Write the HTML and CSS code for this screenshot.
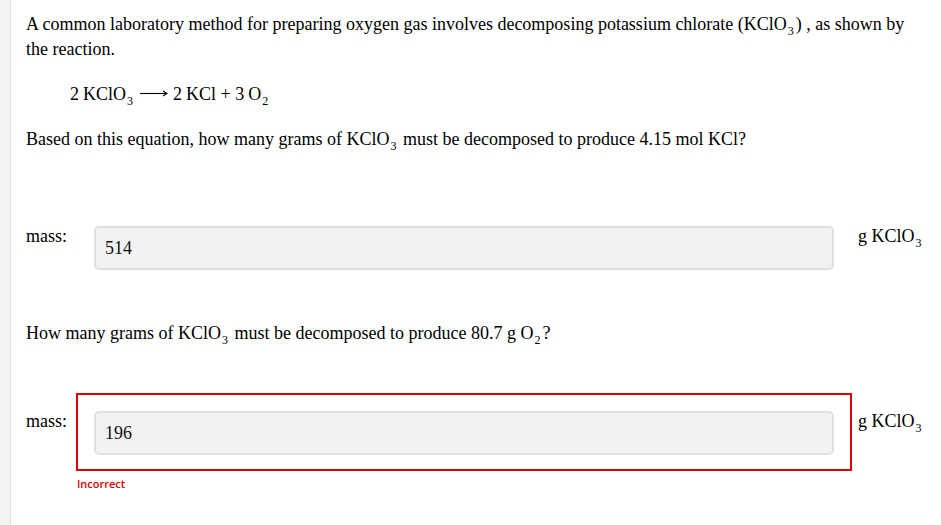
FILE: index.html
```html
<!DOCTYPE html>
<html>
<head>
<meta charset="utf-8">
<link rel="stylesheet" href="styles.css">
</head>
<body>
<div class="page">
  <div class="rail"></div>
  <main class="content">
    <p class="intro">A common laboratory method for preparing oxygen gas involves decomposing potassium chlorate (KClO<sub>3</sub>) , as shown by the reaction.</p>
    <p class="equation"><span class="coef">2</span>KClO<sub>3</sub><svg class="arrow" width="28" height="10" viewBox="0 0 28 10" aria-hidden="true"><path d="M0 5.5H26.5" stroke="#000" stroke-width="1.1" fill="none"/><path d="M23 3L27 5.5L23 8" stroke="#000" stroke-width="1.1" fill="none"/></svg><span class="coef">2</span>KCl + <span class="coef">3</span>O<sub>2</sub></p>
    <p class="question q1">Based on this equation, how many grams of KClO<sub>3</sub> must be decomposed to produce 4.15 mol KCl?</p>
    <div class="answer-row">
      <div class="label">mass:</div>
      <div class="field">
        <div class="input">514</div>
      </div>
      <div class="unit">g KClO<sub>3</sub></div>
    </div>
    <p class="question q2">How many grams of KClO<sub>3</sub> must be decomposed to produce 80.7 g O<sub>2</sub>?</p>
    <div class="answer-row">
      <div class="label">mass:</div>
      <div class="field field-wrong">
        <div class="input">196</div>
      </div>
      <div class="unit">g KClO<sub>3</sub></div>
      <div class="feedback">Incorrect</div>
    </div>
  </main>
</div>
</body>
</html>
```
FILE: styles.css
```css
html, body {
  margin: 0;
  padding: 0;
  background: #ffffff;
}
body {
  font-family: "Liberation Serif", "Times New Roman", serif;
  font-size: 18px;
  color: #000;
}
.page {
  display: flex;
  min-height: 525px;
}
.rail {
  width: 10px;
  flex: 0 0 10px;
  background: #f4f4f4;
  border-right: 1px solid #e3e3e3;
}
.content {
  flex: 1;
  padding: 12px 30px 0 15px;
}
p {
  margin: 0;
  line-height: 25px;
}
sub {
  font-size: 12px;
  line-height: 0;
  vertical-align: -5px;
  margin: 0 2px 0 1px;
}
.equation {
  margin-top: 20px;
  padding-left: 44px;
}
.equation sub {
  margin-right: 0;
}
.coef {
  margin-right: 4px;
}
.arrow {
  display: inline-block;
  vertical-align: 2px;
  margin: 0 5px 0 7px;
}
.q1 {
  margin-top: 20px;
}
.answer-row {
  display: grid;
  grid-template-columns: 50px 1fr 89px;
  margin: 56px -30px 0 0;
}
.label {
  padding-top: 19px;
  line-height: 18px;
}
.field {
  border: 2px solid transparent;
  padding: 16px 16px 14px 16px;
}
.field-wrong {
  border-color: #dc0000;
}
.input {
  height: 40px;
  line-height: 40px;
  background: #f2f2f2;
  border: 2px solid #e0e0e0;
  border-radius: 5px;
  padding-left: 9px;
  color: #111;
}
.unit {
  padding: 19px 0 0 6px;
  line-height: 18px;
}
.q2 {
  margin-top: 35px;
}
.q2 + .answer-row {
  margin-top: 47px;
}
.feedback {
  grid-column: 2;
  font-family: "Open Sans", "Liberation Sans", sans-serif;
  font-weight: 600;
  font-size: 11px;
  line-height: 15px;
  color: #dc0000;
  margin-top: 5px;
  padding-left: 1px;
}
```
